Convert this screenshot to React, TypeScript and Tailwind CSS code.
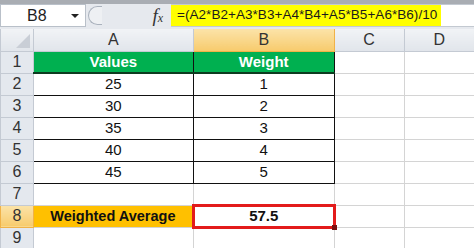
const rows = [
  { n: 1, a: "Values", b: "Weight", kind: "head" },
  { n: 2, a: "25", b: "1", kind: "data" },
  { n: 3, a: "30", b: "2", kind: "data" },
  { n: 4, a: "35", b: "3", kind: "data" },
  { n: 5, a: "40", b: "4", kind: "data" },
  { n: 6, a: "45", b: "5", kind: "data" },
  { n: 7, a: "", b: "", kind: "empty" },
  { n: 8, a: "Weighted Average", b: "57.5", kind: "result" },
  { n: 9, a: "", b: "", kind: "empty" },
];

const FormulaBar = () => (
  <div className="flex h-[23px] items-stretch bg-[#e6e9ee]">
    <div className="flex w-[86px] items-center border border-[#b9c0c9] bg-white pl-[26px] pr-[6px]">
      <span className="text-[16px] leading-none text-[#1e1e1e]">B8</span>
      <span className="ml-auto h-0 w-0 border-x-[4px] border-t-[4px] border-x-transparent border-t-[#222]" />
    </div>
    <div className="ml-[2px] mt-[2px] h-[19px] w-[14px] rounded-l-full border border-r-0 border-[#aab2bd] bg-[#eef0f3]" />
    <div className="flex w-[69px] items-center justify-end pr-[8px]">
      <span className="font-['Liberation_Serif',serif] text-[19px] italic leading-none text-[#333]">
        f<span className="text-[12px]">x</span>
      </span>
    </div>
    <div className="flex flex-1 items-stretch border-y border-[#c3c9d1] bg-white">
      <div className="flex w-[270px] items-center whitespace-nowrap bg-[#ffff00] pl-[6px] text-[13.5px] tracking-[0.05px] text-[#1b1b1b]">
        =(A2*B2+A3*B3+A4*B4+A5*B5+A6*B6)/10
      </div>
    </div>
  </div>
);

const App = () => {
  return (
    <div className="h-[248px] w-[474px] overflow-hidden bg-white font-['Liberation_Sans',Arial,sans-serif]">
      <div className="h-[4px] bg-[#a9adb3]" />
      <FormulaBar />
      <div className="h-[2px] bg-[#e6e9ee]" />
      <table className="table-fixed border-collapse text-[15px] leading-[18px] text-[#111]">
        <colgroup>
          <col className="w-[33px]" />
          <col className="w-[160px]" />
          <col className="w-[141px]" />
          <col className="w-[70px]" />
          <col className="w-[70px]" />
        </colgroup>
        <thead>
          <tr className="h-[22px]">
            <th className="relative h-[22px] border border-t-0 border-[#c4cad3] bg-gradient-to-b from-[#f1f3f6] to-[#e1e5eb] p-0">
              <span className="absolute bottom-[3px] right-[3px] h-0 w-0 border-b-[14px] border-l-[14px] border-b-[#c9ced6] border-l-transparent" />
            </th>
            <th className="h-[22px] border border-t-0 border-[#c4cad3] bg-gradient-to-b from-[#f1f3f6] to-[#e1e5eb] p-0 text-[16px] font-normal text-[#333]">A</th>
            <th className="h-[22px] border border-t-0 border-[#f0b248] bg-gradient-to-b from-[#fbe3a8] to-[#f7cb6c] p-0 text-[16px] font-normal text-[#333]">B</th>
            <th className="h-[22px] border border-t-0 border-[#c4cad3] bg-gradient-to-b from-[#f1f3f6] to-[#e1e5eb] p-0 text-[16px] font-normal text-[#333]">C</th>
            <th className="h-[22px] border border-t-0 border-r-0 border-[#c4cad3] bg-gradient-to-b from-[#f1f3f6] to-[#e1e5eb] p-0 text-[16px] font-normal text-[#333]">D</th>
          </tr>
        </thead>
        <tbody>
          {rows.map((r) => {
            const rowHead =
              r.n === 8
                ? "border border-[#f0b248] bg-gradient-to-b from-[#fbe3a8] to-[#f7cb6c]"
                : "border border-[#c4cad3] bg-[#e4e8ee]";
            let a = "border border-[#d4d4d4]";
            let b = "border border-[#d4d4d4]";
            if (r.kind === "head") {
              a = "border border-[#111] border-b-2 border-b-[#0d3b1f] bg-[#00b050] font-bold text-white";
              b = "border border-[#111] border-b-2 border-b-[#0d3b1f] bg-[#00b050] font-bold text-white";
            } else if (r.kind === "data") {
              a = "border border-[#111]";
              b = "border border-[#111]";
            } else if (r.kind === "result") {
              a = "border border-[#d4d4d4] bg-[#ffc000] text-[14.5px] font-bold";
              b = "border-[3px] border-[#e31b1b] font-bold";
            }
            return (
              <tr key={r.n} className="h-[22px]">
                <td className={`${rowHead} h-[22px] p-0 text-center text-[16px] text-[#333]`}>{r.n}</td>
                <td className={`${a} h-[22px] p-0 text-center`}>{r.a}</td>
                <td className={`${b} relative h-[22px] p-0 text-center`}>
                  {r.b}
                  {r.kind === "result" && (
                    <span className="absolute bottom-[-4px] right-[-4px] h-[5px] w-[5px] bg-[#7a1010]" />
                  )}
                </td>
                <td className="h-[22px] border border-[#d4d4d4] p-0" />
                <td className="h-[22px] border border-r-0 border-[#d4d4d4] p-0" />
              </tr>
            );
          })}
        </tbody>
      </table>
    </div>
  );
};

export default App;
